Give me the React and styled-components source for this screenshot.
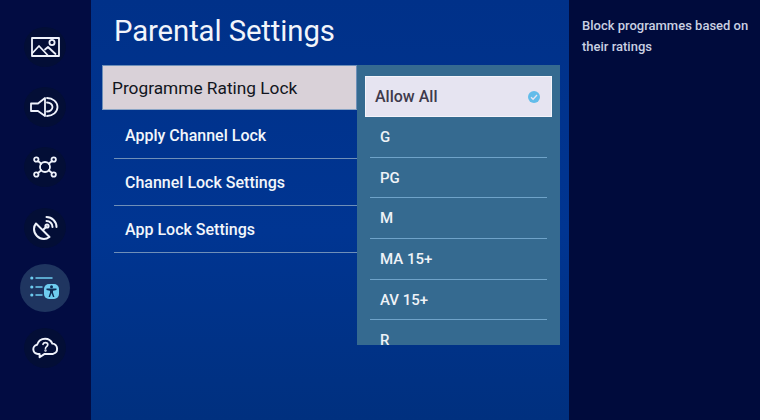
import React from "react";
import styled, { createGlobalStyle } from "styled-components";

const Global = createGlobalStyle`
  html, body { margin: 0; padding: 0; background: #000b3c; }
  body { font-family: Roboto, "Noto Sans", sans-serif; }
`;

const Screen = styled.div`
  width: 760px;
  height: 420px;
  display: grid;
  grid-template-columns: 91px 478px 191px;
  overflow: hidden;
`;

const Rail = styled.nav`
  background: #020c42;
  display: flex;
  flex-direction: column;
  align-items: center;
  padding-top: 17px;
  padding-right: 1px;
  box-sizing: border-box;
`;

const RailSlot = styled.div`
  height: 60.2px;
  display: flex;
  align-items: center;
  justify-content: center;
`;

const RailButton = styled.div`
  width: ${(p) => (p.$active ? 50 : 42)}px;
  height: ${(p) => (p.$active ? 48 : 40)}px;
  border-radius: 50%;
  background: ${(p) => (p.$active ? "#1f3560" : "#030e36")};
  display: flex;
  align-items: center;
  justify-content: center;
`;

const Main = styled.main`
  background: linear-gradient(180deg, #003189 0%, #003592 55%, #00307f 100%);
  display: flex;
  flex-direction: column;
  padding: 9px 0 0 11px;
  box-sizing: border-box;
`;

const Title = styled.h1`
  margin: 0 0 12px 12px;
  font-size: 29.3px;
  line-height: 44px;
  font-weight: 400;
  color: #f2f5fb;
  letter-spacing: -0.1px;
  height: 44px;
`;

const Columns = styled.div`
  display: flex;
  align-items: flex-start;
`;

const Menu = styled.ul`
  width: 255px;
  margin: 0;
  padding: 0;
  list-style: none;
`;

const MenuItem = styled.li`
  box-sizing: border-box;
  height: 47px;
  display: flex;
  align-items: center;
  font-size: 16px;
  font-weight: 500;
  margin-left: 12px;
  padding-left: 11px;
  color: #f2f6fb;
  border-bottom: 1px solid #6f8fb8;
  &:nth-child(2) {
    height: 49px;
    padding-top: 3px;
  }
`;

const SelectedItem = styled.li`
  box-sizing: border-box;
  height: 45px;
  display: flex;
  align-items: center;
  font-size: 17.3px;
  font-weight: 400;
  padding: 1px 0 0 9px;
  color: #111520;
  background: #d9d1d8;
  border: 1px solid #6d8fb8;
  border-bottom-color: #8aa5c6;
`;

const Popup = styled.div`
  width: 203px;
  height: 280px;
  background: #356a90;
  box-sizing: border-box;
  padding: 11px 8px 0;
  overflow: hidden;
`;

const OptionSelected = styled.div`
  height: 41px;
  box-sizing: border-box;
  background: #e6e4f1;
  border: 1px solid #f4f3fa;
  display: flex;
  align-items: center;
  justify-content: space-between;
  padding: 0 10px 0 9px;
  font-size: 16px;
  font-weight: 500;
  color: #3e3a4c;
`;

const Option = styled.div`
  height: 40.7px;
  box-sizing: border-box;
  margin: 0 5px;
  padding-left: 10px;
  display: flex;
  align-items: center;
  font-size: 15px;
  font-weight: 500;
  color: #eef2f7;
  border-bottom: 1px solid #6fa3c9;
`;

const Aside = styled.aside`
  background: #000b3c;
  padding: 15px 0 0 13px;
  color: #c9d0e2;
  font-size: 13px;
  line-height: 21px;
  font-weight: 500;
`;

const Check = () => (
  <svg width="14" height="14" viewBox="0 0 14 14">
    <circle cx="7" cy="7" r="6" fill="#62bcea" />
    <path d="M4 7.2l2.1 2.1L10 5" fill="none" stroke="#e6e4f1" strokeWidth="1.3" />
  </svg>
);

const stroke = { fill: "none", stroke: "#eef2fb", strokeWidth: 1.8, strokeLinecap: "round", strokeLinejoin: "round" };

const PictureIcon = () => (
  <svg width="29" height="20" viewBox="0 0 29 20" {...stroke}>
    <rect x="1" y="1" width="27" height="18" />
    <path d="M1.5 16l6.5-7 8.5 9M14 12.5l3-2.5 7.5 7" />
    <circle cx="21" cy="5.5" r="2.6" />
  </svg>
);

const SoundIcon = () => (
  <svg width="30" height="20" viewBox="0 0 30 20" {...stroke}>
    <path d="M1 6.500h7L15 1v18l-7-5H1z" />
    <path d="M17 1a10.500 9 0 0 1 0 18" />
    <path d="M17 5.500a5.500 4.500 0 0 1 0 9" />
  </svg>
);

const NetworkIcon = () => (
  <svg width="24" height="22" viewBox="0 0 24 22" {...stroke}>
    <circle cx="12" cy="11" r="5" />
    <circle cx="3.300" cy="3.500" r="2.200" />
    <circle cx="20.700" cy="3.500" r="2.200" />
    <circle cx="3.300" cy="18.500" r="2.200" />
    <circle cx="20.700" cy="18.500" r="2.200" />
    <path d="M5 5l3.300 2.800M19 5l-3.300 2.800M5 17l3.300-2.800M19 17l-3.300-2.800" />
  </svg>
);

const DishIcon = () => (
  <svg width="26" height="24" viewBox="0 0 26 24" {...stroke} strokeWidth="2">
    <path d="M4 7.500L17.500 21c-1.800 1.300-3.600 2-5.500 2C6.500 23 2 18.500 2 13c0-2 .7-4 2-5.500z" />
    <path d="M11 14l3-3" />
    <circle cx="15" cy="10" r="1.600" />
    <path d="M14.500 5a6 6 0 0 1 6 6" />
    <path d="M14.500 1a10 10 0 0 1 10 10" />
  </svg>
);

const SupportIcon = () => (
  <svg width="27" height="22" viewBox="0 0 32 26" {...stroke} strokeWidth="2.300">
    <path d="M9 20H7a5.500 5.500 0 0 1-1-10.900C7.500 4.500 11.500 2 15.500 2c4 0 7.200 2.300 8.600 5.800A6.200 6.200 0 0 1 25 20H15l-6 4z" />
    <path d="M13 8.600c.4-1.300 1.500-2 2.900-2 1.600 0 2.800 1 2.800 2.400 0 2.200-2.700 2.300-2.700 4.200" strokeWidth="2" />
    <circle cx="16" cy="16" r=".5" strokeWidth="1.800" />
  </svg>
);

const AccessIcon = () => (
  <svg width="30" height="23" viewBox="0 0 30 23" fill="none">
    <g stroke="#6fcdf0" strokeWidth="1.500" strokeLinecap="round">
      <path d="M6 2h16M6 11h6M6 19h6" />
    </g>
    <g fill="#6fcdf0">
      <circle cx="1.800" cy="2" r="1.600" />
      <circle cx="1.800" cy="11" r="1.600" />
      <circle cx="1.800" cy="19" r="1.600" />
      <rect x="14" y="8" width="15" height="15" rx="5" />
    </g>
    <g fill="#0f2c55">
      <circle cx="21.500" cy="10.800" r="1.500" />
      <path d="M16.500 12.600h10v1.300l-3.500.8v1.900l1.400 4.400H23l-1.500-3.900-1.500 3.900h-1.400l1.400-4.400v-1.900l-3.500-.8z" />
    </g>
  </svg>
);

const items = [
  { key: "picture", icon: <PictureIcon /> },
  { key: "sound", icon: <SoundIcon /> },
  { key: "network", icon: <NetworkIcon /> },
  { key: "dish", icon: <DishIcon /> },
  { key: "access", icon: <AccessIcon />, active: true },
  { key: "support", icon: <SupportIcon /> },
];

export default function App() {
  return (
    <>
      <Global />
      <Screen>
        <Rail>
          {items.map((i) => (
            <RailSlot key={i.key}>
              <RailButton $active={i.active}>{i.icon}</RailButton>
            </RailSlot>
          ))}
        </Rail>
        <Main>
          <Title>Parental Settings</Title>
          <Columns>
            <Menu>
              <SelectedItem>Programme Rating Lock</SelectedItem>
              <MenuItem>Apply Channel Lock</MenuItem>
              <MenuItem>Channel Lock Settings</MenuItem>
              <MenuItem>App Lock Settings</MenuItem>
            </Menu>
            <Popup>
              <OptionSelected>
                Allow All
                <Check />
              </OptionSelected>
              {["G", "PG", "M", "MA 15+", "AV 15+", "R"].map((o) => (
                <Option key={o}>{o}</Option>
              ))}
            </Popup>
          </Columns>
        </Main>
        <Aside>
          Block programmes based on
          <br />
          their ratings
        </Aside>
      </Screen>
    </>
  );
}
